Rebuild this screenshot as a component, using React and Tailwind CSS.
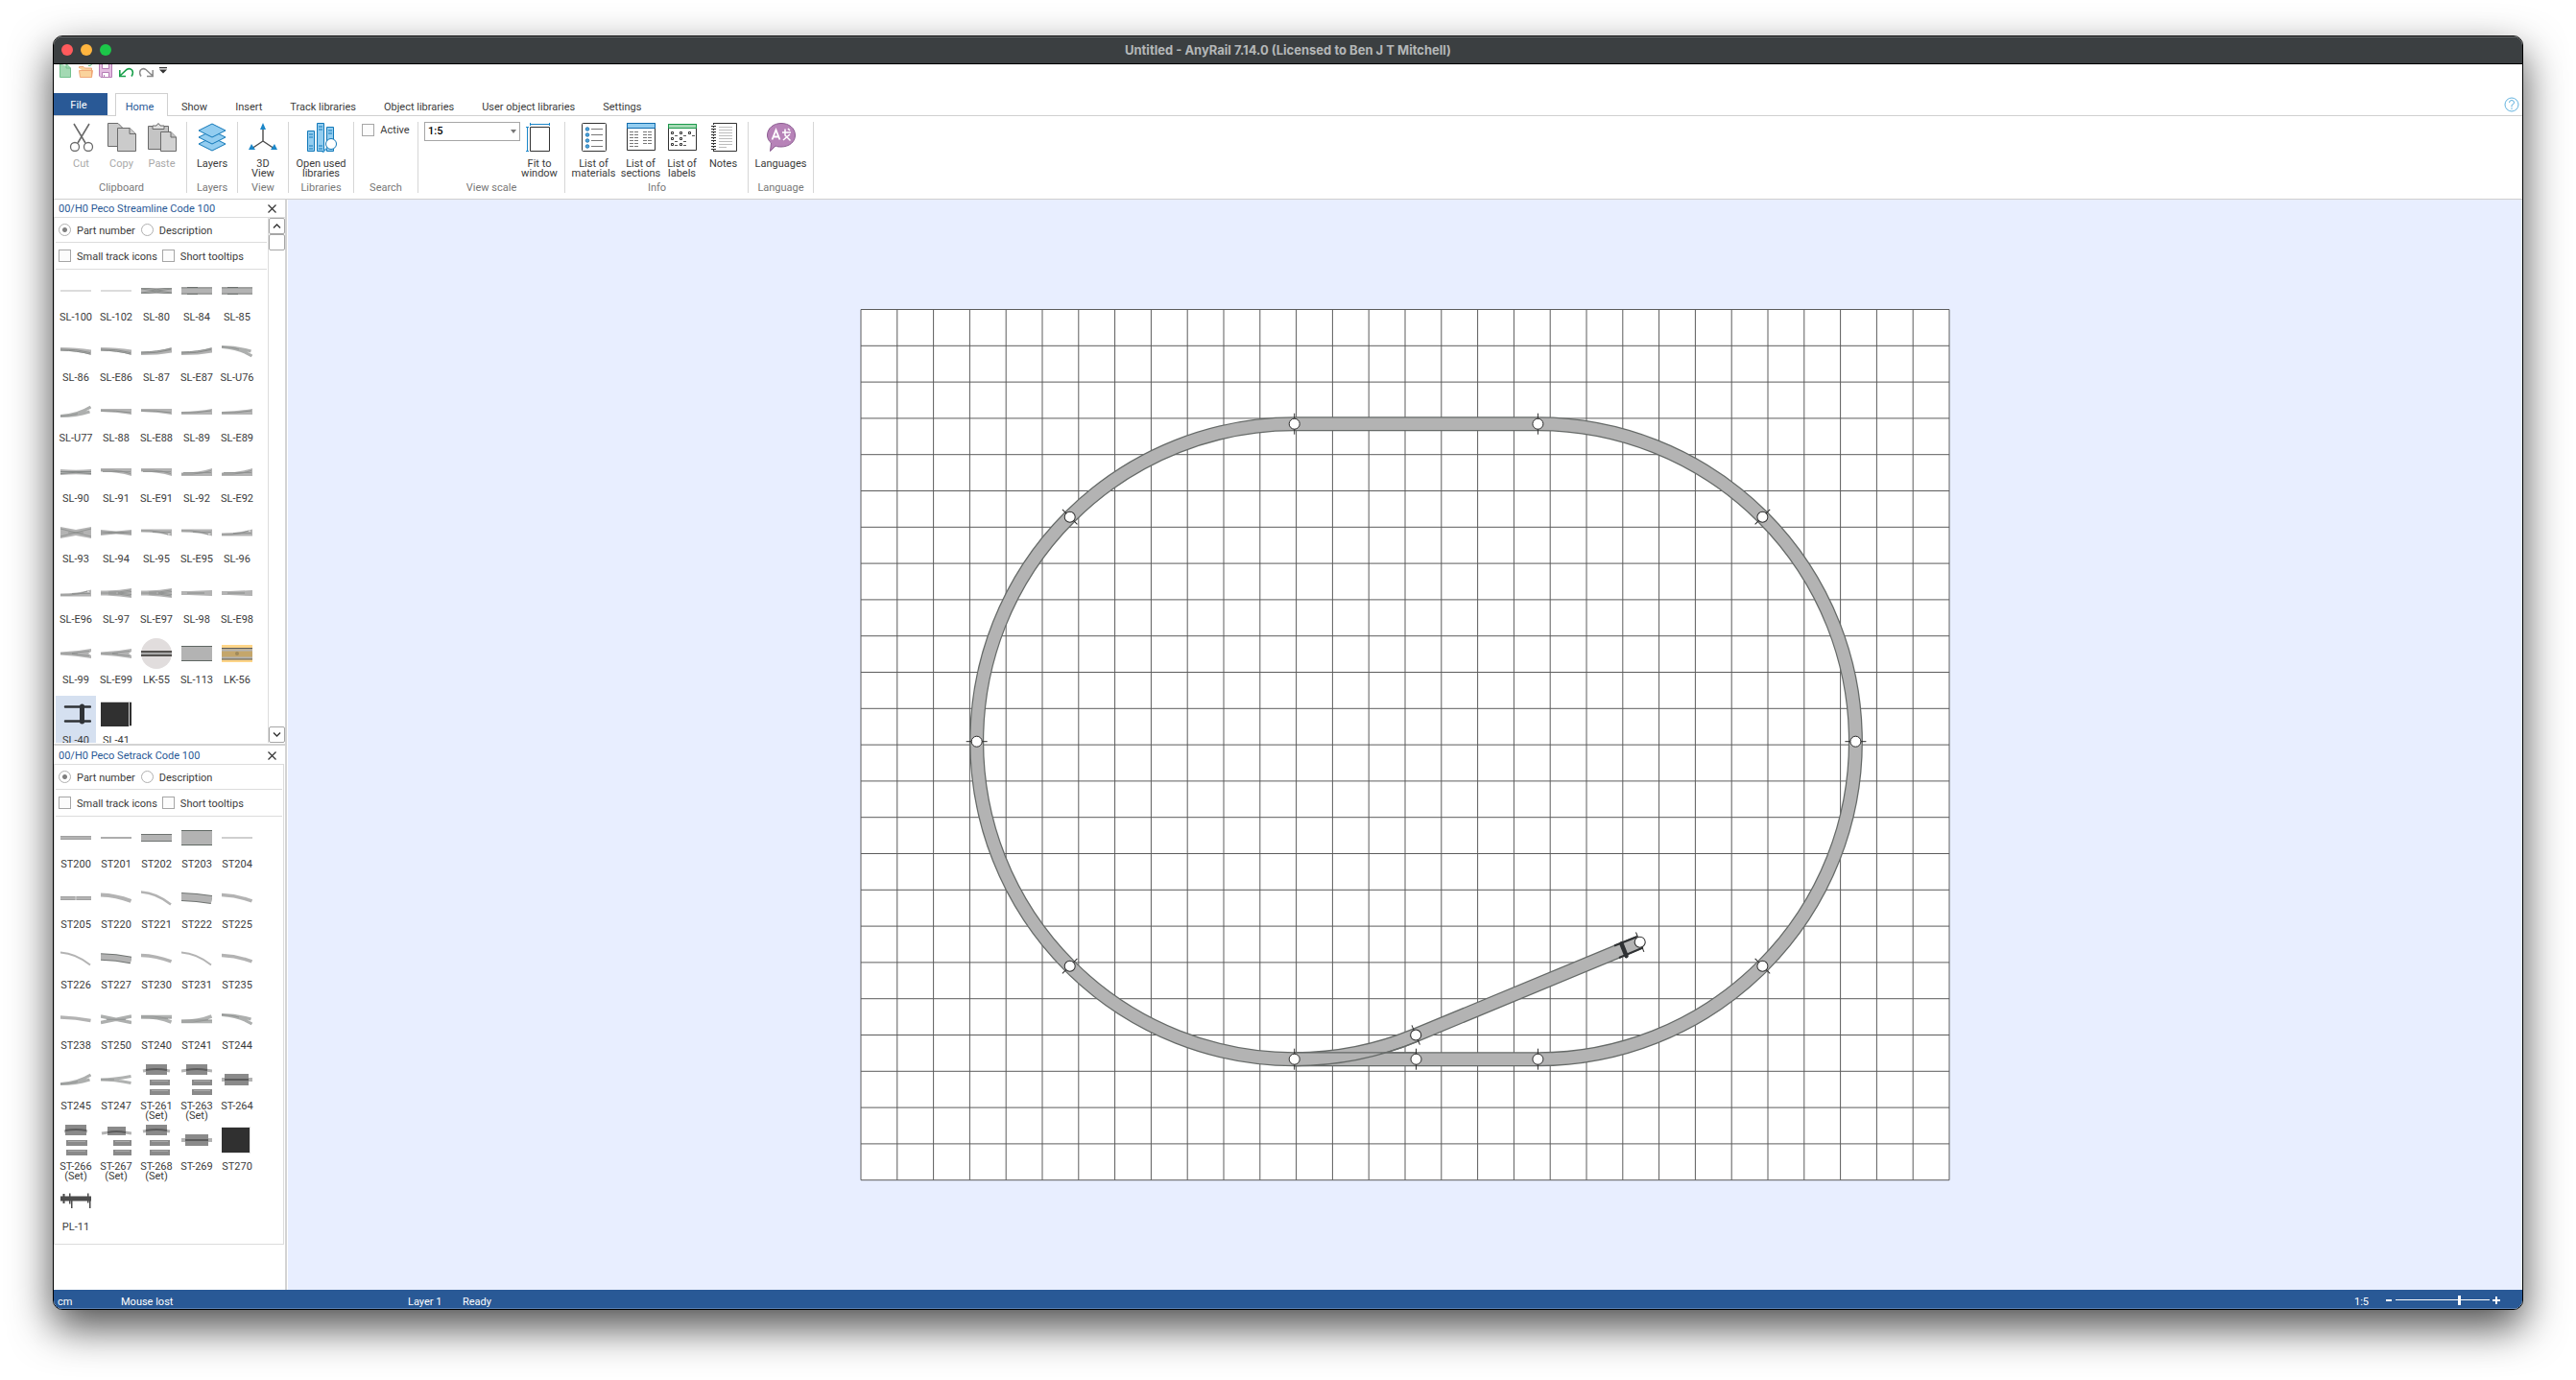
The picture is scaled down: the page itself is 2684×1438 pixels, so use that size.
import * as React from "react";

const tabs = [
  "Show",
  "Insert",
  "Track libraries",
  "Object libraries",
  "User object libraries",
  "Settings",
];

const RAIL = "#b3b3b3";
const EDGE = "#8a8d8b";

// Small drawings for the library panels, all on a 32x32 box
const Flip = ({ children }) => <g transform="matrix(1 0 0 -1 0 32)">{children}</g>;

const Wire = ({ color = "#dcdcdc" }) => <rect y="15" width="32" height="2" fill={color} />;

const Straight = ({ h, edge, split }) => (
  <g>
    <rect y={16 - h / 2} width="32" height={h} fill={RAIL} />
    {edge && (
      <path
        d={`M0 ${16.5 - h / 2}H32M0 ${15.5 + h / 2}H32`}
        stroke={edge}
        strokeWidth="1"
      />
    )}
    {split && <rect x="15.5" y={16 - h / 2} width="1" height={h} fill="#d8d8d8" />}
  </g>
);

const Curve = ({ d, w, edge }) => (
  <g fill="none">
    {edge && <path d={d} stroke="#6f7371" strokeWidth={w} />}
    <path d={d} stroke={RAIL} strokeWidth={edge ? w - 2 : w} />
  </g>
);

const Slip = () => (
  <g>
    <rect y="13" width="32" height="6" fill={RAIL} />
    <path d="M0 13.5H8Q16 16 24 13.5H32M0 18.5H8Q16 16 24 18.5H32M0 14L32 18M0 18L32 14" stroke={EDGE} fill="none" />
  </g>
);

const DoubleSlip = () => (
  <g>
    <path d="M0 13Q16 14.500 32 13V19Q16 17.500 0 19Z" fill={RAIL} />
    <path d="M0 15.500H32M0 17.500Q16 15 32 17.500" stroke="#858988" fill="none" />
  </g>
);

const Catch = ({ dark = 6 }) => (
  <g>
    <rect y="12" width="32" height="8" fill={RAIL} />
    <path d="M0 13H32M0 19H32" stroke={EDGE} />
    <path d={`M${dark} 12.500H${dark + 11}M${dark} 19.500H${dark + 11}`} stroke="#6c706e" />
  </g>
);

const CurvedTurnout = () => (
  <g>
    <path d="M0 12Q18 12 32 14.500V20Q18 15.500 0 15.500Z" fill={RAIL} />
    <path d="M0 14Q16 13.500 31 17.500M0 15Q18 15.500 31 19" stroke={EDGE} fill="none" />
  </g>
);

const SlimTurnout = () => (
  <g>
    <path d="M0 13H32V19Q18 16.500 0 16Z" fill={RAIL} />
    <path d="M0 15Q16 14.500 31 17" stroke={EDGE} fill="none" />
  </g>
);

const Turnout = () => (
  <g>
    <path d="M0 12H32V20Q18 15.500 0 15.500Z" fill={RAIL} />
    <path d="M0 14H12Q22 14.500 31 17.500M2 15.500H31" stroke={EDGE} fill="none" strokeWidth="0.8" />
  </g>
);

const LongTurnout = () => (
  <g>
    <path d="M0 12.500H32V19.500Q18 15.500 0 15.500Z" fill={RAIL} />
    <path d="M0 14H10Q20 14.500 28 18M12 15.500H31" stroke={EDGE} fill="none" strokeWidth="0.8" />
    <circle cx="29" cy="17.500" r="0.8" fill="#e5e5e5" />
  </g>
);

const Crossing = ({ e, m }) => (
  <g>
    <path
      d={`M0 ${16 - e}L16 ${16 - m}L32 ${16 - e}V${16 + e}L16 ${16 + m}L0 ${16 + e}Z`}
      fill={RAIL}
    />
    <path
      d={`M0 ${16 - e + 2}L32 ${16 + e - 2}M0 ${16 + e - 2}L32 ${16 - e + 2}M8 16H24`}
      stroke={EDGE}
      strokeWidth="0.8"
    />
  </g>
);

const ThreeWay = () => (
  <g>
    <path d="M0 13.500H6Q20 13 32 11V21Q20 19 6 18.500H0Z" fill={RAIL} />
    <path d="M0 16H16M8 15Q20 15.500 31 13M8 17Q20 16.500 31 19M18 16L32 14.500M18 16L32 17.500" stroke={EDGE} fill="none" strokeWidth="0.8" />
  </g>
);

const SlimY = () => (
  <g>
    <path d="M0 14H8L32 13V19L8 18H0Z" fill={RAIL} />
    <path d="M6 16H24" stroke={EDGE} />
  </g>
);

const WideY = () => (
  <g>
    <path d="M0 14.500Q16 14 32 11V14L29 16L32 18V21Q16 18 0 17.500Z" fill={RAIL} />
    <path d="M0 16H18M12 15.500L30 13.500M12 16.500L30 18.500" stroke={EDGE} strokeWidth="0.8" />
  </g>
);

const Fork = () => (
  <g fill="none">
    <path d="M0 11.500Q16 11.500 30.500 16M0 11.500Q18 12.500 31.500 21" stroke="#adafae" strokeWidth="3" />
    <path d="M0 11.500Q10 11.500 18 14" stroke="#8f9291" />
  </g>
);

const Points = () => (
  <g fill="none">
    <path d="M0 13.500H32M0 13.500Q18 13.500 31.500 19" stroke="#b0b2b1" strokeWidth="3.600" />
    <path d="M0 13H12Q22 14 28 15.500M0 15H32" stroke="#8f9291" strokeWidth="0.8" />
  </g>
);

const WyePoints = () => (
  <g fill="none">
    <path d="M0 16Q14 16 31.500 12.500M0 16Q14 16 31.500 19.500" stroke="#b0b2b1" strokeWidth="3.200" />
    <path d="M0 16H14" stroke="#8f9291" />
  </g>
);

const Diamond = () => (
  <g>
    <path d="M0 13L32 19.500M0 19.500L32 13" stroke="#adafae" strokeWidth="3.600" />
    <path d="M6 16.250H26" stroke="#8f9291" />
  </g>
);

const Platform = ({ x, w, y = 0, h = 11, wide = 3 }) => (
  <g>
    <path
      d={`M${x - wide} ${y + 7}Q${x + w / 2} ${y + 4} ${x + w + wide} ${y + 7}`}
      stroke={RAIL}
      strokeWidth="3"
      fill="none"
    />
    <rect x={x} y={y} width={w} height={h} fill="#8a8a8a" />
    <path d={`M${x} ${y + 6}Q${x + w / 2} ${y + 4} ${x + w} ${y + 6}`} stroke="#5c5c5c" strokeWidth="2" fill="none" />
  </g>
);

const PlatformSet = ({ x, w, px, pw, wide, y }) => (
  <g>
    <Platform x={x} w={w} wide={wide} y={y} h={y ? 9 : 11} />
    <rect x={px} y="16" width={pw} height="6" fill="#8a8a8a" />
    <rect x={px} y="26" width={pw} height="6" fill="#8a8a8a" />
    <path d={`M${px + 2} 17.500H${px + pw - 2}M${px + 2} 27.500H${px + pw - 2}`} stroke="#a9a9a9" />
  </g>
);

const SinglePlatform = ({ x = 3, w = 25 }) => (
  <g>
    <rect y="14" width="32" height="4" fill={RAIL} />
    <rect x={x} y="10" width={w} height="12" fill="#8a8a8a" />
    <rect x={x} y="15" width={w} height="2" fill="#5c5c5c" />
  </g>
);

const streamline = [
  ["SL-100", <Wire />],
  ["SL-102", <Wire />],
  ["SL-80", <Slip />],
  ["SL-84", <Catch />],
  ["SL-85", <Catch />],
  ["SL-86", <CurvedTurnout />],
  ["SL-E86", <CurvedTurnout />],
  ["SL-87", <Flip><CurvedTurnout /></Flip>],
  ["SL-E87", <Flip><CurvedTurnout /></Flip>],
  ["SL-U76", <Fork />],
  ["SL-U77", <Flip><Fork /></Flip>],
  ["SL-88", <SlimTurnout />],
  ["SL-E88", <SlimTurnout />],
  ["SL-89", <Flip><SlimTurnout /></Flip>],
  ["SL-E89", <Flip><SlimTurnout /></Flip>],
  ["SL-90", <DoubleSlip />],
  ["SL-91", <Turnout />],
  ["SL-E91", <Turnout />],
  ["SL-92", <Flip><Turnout /></Flip>],
  ["SL-E92", <Flip><Turnout /></Flip>],
  ["SL-93", <Crossing e={6} m={3} />],
  ["SL-94", <Crossing e={3} m={1.5} />],
  ["SL-95", <LongTurnout />],
  ["SL-E95", <LongTurnout />],
  ["SL-96", <Flip><LongTurnout /></Flip>],
  ["SL-E96", <Flip><LongTurnout /></Flip>],
  ["SL-97", <ThreeWay />],
  ["SL-E97", <ThreeWay />],
  ["SL-98", <SlimY />],
  ["SL-E98", <SlimY />],
  ["SL-99", <WideY />],
  ["SL-E99", <WideY />],
  ["LK-55", (
    <g>
      <circle cx="16" cy="16" r="16" fill="#e1dddd" />
      <rect y="13" width="32" height="6" fill="#a8a8a8" />
      <path d="M0 14H32M0 18H32" stroke="#3b3735" strokeWidth="1.500" />
    </g>
  )],
  ["SL-113", <Straight h={16} edge="#5f6763" />],
  ["LK-56", (
    <g>
      <rect y="7" width="32" height="18" fill="#ffd588" />
      <rect y="10" width="32" height="12" fill="#c4a66b" />
      <path d="M0 12.500H32M0 20.500H32" stroke="#b3b3b3" strokeWidth="2" />
      <path d="M0 10.500H32M0 22H32" stroke="#5a5c5c" />
      <circle cx="16" cy="16" r="2" fill="#a08a5b" />
    </g>
  )],
  ["SL-40", (
    <g stroke="#2f3236" strokeLinecap="round">
      <path d="M5 8.500H31M5 23.500H31" strokeWidth="2.500" />
      <path d="M22.500 8V24" strokeWidth="5" />
    </g>
  )],
  ["SL-41", (
    <g>
      <rect y="3" width="32" height="26" fill="#cfcfcf" />
      <rect y="4" width="29" height="25" fill="#303030" />
      <rect x="30" y="4" width="2" height="24" fill="#303030" />
    </g>
  )],
];

const setrack = [
  ["ST200", <Straight h={4} edge="#a0a0a0" />],
  ["ST201", <Wire color="#adadad" />],
  ["ST202", <Straight h={8} edge="#6f7371" />],
  ["ST203", <Straight h={16} edge="#5f6763" />],
  ["ST204", <Wire color="#cfcfcf" />],
  ["ST205", <Straight h={4} edge="#a0a0a0" split />],
  ["ST220", <Curve d="M0 12.5Q16 13 31.500 19" w={4} />],
  ["ST221", <Curve d="M0 9.5Q16 10.500 31 22.500" w={2.4} />],
  ["ST222", <Curve d="M0 14.5Q16 14.800 31.500 17.500" w={9} edge />],
  ["ST225", <Curve d="M0 12.5Q16 13 31.500 19" w={3.4} />],
  ["ST226", <Curve d="M0 9.5Q16 10.500 31 22.500" w={2} />],
  ["ST227", <Curve d="M0 14Q16 14.300 31.500 17.500" w={7.5} edge />],
  ["ST230", <Curve d="M0 12.5Q16 13 31.500 19" w={3.4} />],
  ["ST231", <Curve d="M0 9.5Q16 10.500 31 22.500" w={1.8} />],
  ["ST235", <Curve d="M0 12.5Q16 13 31.500 19" w={3.4} />],
  ["ST238", <Curve d="M0 14Q16 14.500 31.500 17.500" w={3.6} />],
  ["ST250", <Diamond />],
  ["ST240", <Points />],
  ["ST241", <Flip><Points /></Flip>],
  ["ST244", <Fork />],
  ["ST245", <Flip><Fork /></Flip>],
  ["ST247", <WyePoints />],
  ["ST-261 (Set)", <PlatformSet x={5} w={22} px={9} pw={21} wide={3} />],
  ["ST-263 (Set)", <PlatformSet x={5} w={22} px={11} pw={21} wide={5} />],
  ["ST-264", <SinglePlatform />],
  ["ST-266 (Set)", <PlatformSet x={5} w={22} px={6} pw={22} wide={1} />],
  ["ST-267 (Set)", <PlatformSet x={7} w={19} px={13} pw={19} wide={6} y={2} />],
  ["ST-268 (Set)", <PlatformSet x={5} w={22} px={9} pw={21} wide={3} />],
  ["ST-269", <SinglePlatform x={4} w={24} />],
  ["ST270", (
    <g>
      <rect y="2" width="30" height="28" fill="#e2e2e2" />
      <rect y="3" width="29" height="26" fill="#303030" />
    </g>
  )],
  ["PL-11", (
    <g fill="#4c4c4c">
      <rect y="11.500" width="32" height="5" />
      <rect x="2.500" y="9" width="2" height="10" />
      <rect x="9" y="8.500" width="1.500" height="11" />
      <rect x="11" y="14" width="1.500" height="10" />
      <rect x="28" y="8.500" width="1.500" height="10" />
      <rect x="30" y="14" width="1.500" height="10" />
    </g>
  )],
];

// Ribbon icons, 30x30
const CutIcon = () => (
  <svg viewBox="0 0 30 30" className="size-[30px]" fill="none" stroke="#6b6b6b">
    <path d="M7 1L19 21M23 1L11 21" strokeWidth="1.600" />
    <circle cx="8" cy="25" r="4.500" strokeWidth="1.300" />
    <circle cx="22" cy="25" r="4.500" strokeWidth="1.300" />
  </svg>
);

const CopyIcon = () => (
  <svg viewBox="0 0 30 30" className="size-[30px]" fill="#cbcbcb" stroke="#6b6b6b">
    <path d="M0.500 0.500H11L16.500 6V24.500H0.500Z" />
    <path d="M10.500 5.500H23L29.500 11.500V29.500H10.500Z" />
    <path d="M23 5.500V11.500H29.500" />
  </svg>
);

const PasteIcon = () => (
  <svg viewBox="0 0 30 30" className="size-[30px]" fill="#c4c4c4" stroke="#6b6b6b">
    <path d="M0.500 3.500H21.500V27.500H0.500Z" />
    <path d="M5 6.500V3H9Q11 -1.500 13 3H17V6.500Z" fill="#e0e0e0" />
    <path d="M13.500 9.500H24L29.500 15V29.500H13.500Z" fill="#d2d2d2" />
    <path d="M24 9.500V15H29.500" />
  </svg>
);

const LayersIcon = () => (
  <svg viewBox="0 0 30 30" className="size-[30px]" fill="#93cdf0" stroke="#1278b8">
    <path d="M1 22L15 15L29 22L15 29Z" />
    <path d="M1 15L15 8L29 15L15 22Z" />
    <path d="M1 8L15 1L29 8L15 15Z" />
  </svg>
);

const ThreeDIcon = () => (
  <svg viewBox="0 0 30 30" className="size-[30px]">
    <path d="M15 5V19L3 27M15 19L27 27" fill="none" stroke="#4a4a4a" strokeWidth="1.400" />
    <path d="M15 0L18 7H12ZM0 28L3 22L7 28ZM30 28L23 28L27 22Z" fill="#1c87c9" />
  </svg>
);

const LibrariesIcon = () => (
  <svg viewBox="0 0 32 32" className="size-8" fill="#93cdf0" stroke="#1278b8">
    <path d="M1.500 9.500H8.500V30.500H1.500ZM11.500 1.500H18.500V30.500H11.500ZM21.500 5.500H28.500V30.500H21.500Z" />
    <path d="M3 13H7M3 16H7M3 25H7M3 28H7M13 5H17M13 8H17M13 25H17M13 28H17M23 9H27M23 12H27" />
    <circle cx="26" cy="23" r="5.500" fill="#ffffff" />
    <path d="M22 27L17 32" stroke="#4a9fd4" strokeWidth="1.600" />
  </svg>
);

const FitIcon = () => (
  <svg viewBox="0 0 30 32" className="h-8 w-[30px]" fill="none" stroke="#1c87c9">
    <path d="M5.500 2.500H25.500M5.500 1V4M25.500 1V4M2.500 5.500V30.500M1 5.500H4M1 30.500H4" />
    <path d="M5.500 5.500H25.500V30.500H5.500Z" stroke="#333333" />
  </svg>
);

const MaterialsIcon = () => (
  <svg viewBox="0 0 30 32" className="h-8 w-[30px]" fill="none">
    <rect x="2.500" y="1.500" width="25" height="29" rx="1" stroke="#333333" />
    <path d="M12 7.500H24M12 13.500H24M12 19.500H24M12 25.500H24" stroke="#777777" />
    <g fill="#4aa3dc" stroke="#1c6ea8" strokeWidth="0.800">
      <circle cx="8" cy="7.500" r="1.800" />
      <circle cx="8" cy="13.500" r="1.800" />
      <circle cx="8" cy="19.500" r="1.800" />
      <circle cx="8" cy="25.500" r="1.800" />
    </g>
  </svg>
);

const SectionsIcon = () => (
  <svg viewBox="0 0 30 32" className="h-8 w-[30px]" fill="none">
    <path d="M0.500 1.500H29.500V29.500H0.500Z" stroke="#333333" />
    <path d="M0.500 1.500H29.500V6.500H0.500Z" fill="#93cdf0" stroke="#0f6db0" />
    <path d="M3 10.500H13M3 13.500H13M3 16.500H13M3 19.500H13M3 22.500H13M3 25.500H13M17 10.500H27M17 13.500H27M17 16.500H27M17 19.500H27M17 22.500H27" stroke="#777777" strokeDasharray="4 1" />
  </svg>
);

const LabelsIcon = () => (
  <svg viewBox="0 0 30 32" className="h-8 w-[30px]" fill="none">
    <path d="M0.500 2.500H29.500V29.500H0.500Z" stroke="#333333" />
    <path d="M0.500 2.500H29.500V6.500H0.500Z" fill="#a5d9b4" stroke="#1b9a4b" />
    <path d="M3.500 10.500H5.500V12.500H3.500ZM12.500 10.500H14.500V12.500H12.500ZM21.500 10.500H23.500V12.500H21.500ZM3.500 16.500H5.500V18.500H3.500ZM12.500 16.500H14.500V18.500H12.500ZM3.500 22.500H5.500V24.500H3.500ZM12.500 22.500H14.500V24.500H12.500Z" stroke="#333333" />
    <path d="M7 14.500H10M16 14.500H19M25 14.500H28M7 20.500H10M16 20.500H19M7 24.500H10M16 24.500H19" stroke="#555555" />
  </svg>
);

const NotesIcon = () => (
  <svg viewBox="0 0 30 32" className="h-8 w-[30px]" fill="none">
    <path d="M4 1.500H28.500V30.500H4" stroke="#333333" />
    <path d="M4.500 1V31" stroke="#333333" strokeDasharray="2 1" />
    <path d="M2 4.500H7M2 7.500H7M2 10.500H7M2 13.500H7M2 16.500H7M2 19.500H7M2 22.500H7M2 25.500H7M2 28.500H7" stroke="#333333" />
    <path d="M10 5.500H24M10 8.500H24M10 11.500H24M10 14.500H24M10 17.500H24M10 20.500H24M10 23.500H24M10 26.500H18" stroke="#bdbdbd" />
  </svg>
);

const LanguagesIcon = () => (
  <svg viewBox="0 0 30 32" className="h-8 w-[30px]">
    <path d="M15 1.500C23 1.500 29.500 6.500 29.500 14C29.500 21 23 26 15 26C13 26 11 26 9 25L3.500 30.500L4.500 22C2 20 0.500 17 0.500 14C0.500 6.500 7 1.500 15 1.500Z" fill="#b783b8" stroke="#8b5d91" />
    <g fill="none" stroke="#ffffff" strokeWidth="1.800">
      <path d="M5.500 18.500L9.500 8.500L13.500 18.500M7 15.500H12" />
      <path d="M16 11H25M19 7.500V14L24.500 19.500M24 13L17 19M22 7L24 9" strokeWidth="1.500" />
    </g>
  </svg>
);

function Group({ label, className, children }) {
  return (
    <div className={`flex h-[74px] flex-col border-r border-[#d6d6d6] ${className}`}>
      <div className="flex flex-1 items-start justify-center">{children}</div>
      <div className="text-center leading-[11px] text-[#777777]">{label}</div>
    </div>
  );
}

function BigButton({ icon, lines, className, disabled }) {
  return (
    <button
      type="button"
      disabled={disabled}
      className={`flex flex-col items-center leading-[10px] disabled:text-[#a9a9a9] ${className}`}
    >
      <span className="flex h-8 items-center">{icon}</span>
      <span className="mt-[7px]">
        {lines.map((line) => (
          <span key={line} className="block whitespace-nowrap">{line}</span>
        ))}
      </span>
    </button>
  );
}

function Check({ label }) {
  return (
    <label className="flex items-center gap-[6px]">
      <input type="checkbox" className="size-[13px] appearance-none border border-[#a6a6a6] bg-[#fcfcfc] checked:bg-[#295996]" />
      <span className="pt-px">{label}</span>
    </label>
  );
}

function Radio({ label, name, defaultChecked }) {
  return (
    <label className="flex items-center gap-[6px]">
      <input
        type="radio"
        name={name}
        defaultChecked={defaultChecked}
        className="size-[13px] appearance-none rounded-full border border-[#b0b0b0] bg-white checked:bg-[radial-gradient(circle,#808080_0_2px,#ffffff_3px)]"
      />
      <span className="pt-px">{label}</span>
    </label>
  );
}

function Chevron({ up }) {
  return (
    <svg viewBox="0 0 9 9" className="size-[9px]" fill="none" stroke="#333333" strokeWidth="1.400">
      <path d={up ? "M1 6.500L4.500 3L8 6.500" : "M1 2.500L4.500 6L8 2.500"} />
    </svg>
  );
}

function LibraryPanel({ title, name, items, selected, scroll }) {
  return (
    <section className={`flex min-h-0 flex-col ${scroll ? "mb-px border-b-2 border-[#d3d3d3]" : ""}`}>
      <header className="flex h-[18px] shrink-0 items-center justify-between pr-2 pl-[5px]">
        <h2 className="text-[#295996]">{title}</h2>
        <button type="button" aria-label="Close" className="p-px">
          <svg viewBox="0 0 9 9" className="size-[9px]" stroke="#333333" strokeWidth="1.200">
            <path d="M0.500 0.500L8.500 8.500M8.500 0.500L0.500 8.500" />
          </svg>
        </button>
      </header>
      <div className={`flex min-h-0 border border-[#dcdcdc] ${scroll ? "mb-px flex-1 border-r-0 border-b-0" : "mr-px"}`}>
        <div className="flex min-w-0 flex-1 flex-col overflow-hidden px-px">
          <div className="flex h-[26px] shrink-0 items-center gap-[6px] border-b border-[#dcdcdc] pl-[3px]">
            <Radio label="Part number" name={name} defaultChecked />
            <Radio label="Description" name={name} />
          </div>
          <div className="mb-[3px] flex h-7 shrink-0 items-center gap-[5px] border-b border-[#dcdcdc] pl-[3px]">
            <Check label="Small track icons" />
            <Check label="Short tooltips" />
          </div>
          <ul className={`grid grid-cols-[repeat(auto-fill,42px)] auto-rows-[63px] ${scroll ? "min-h-0 flex-1 overflow-hidden" : "pb-px"}`}>
            {items.map(([label, icon]) => (
              <li
                key={label}
                className={`flex flex-col items-center pt-[3px] text-center leading-[10px] ${label === selected ? "bg-[#d5e0f0]" : ""}`}
              >
                <svg viewBox="0 0 32 32" className="size-8">{icon}</svg>
                <span className="mt-[7px]">{label}</span>
              </li>
            ))}
          </ul>
        </div>
        {scroll && (
          <div className="flex w-[18px] flex-col border-l border-[#dcdcdc]">
            <button type="button" aria-label="Scroll up" className="flex h-[17px] items-center justify-center rounded-xs border border-[#a6a6a6]">
              <Chevron up />
            </button>
            <div className="h-[17px] rounded-xs border border-[#a6a6a6]" />
            <button type="button" aria-label="Scroll down" className="mt-auto flex h-[17px] items-center justify-center rounded-xs border border-[#a6a6a6]">
              <Chevron />
            </button>
          </div>
        )}
      </div>
    </section>
  );
}

// Joints of the track plan: x, y and direction of the tick in degrees
const joints = [
  [452.7, 120.7, 90],
  [706.4, 120.7, 90],
  [218.7, 217.7, 45],
  [940.4, 217.7, -45],
  [121.7, 451.7, 0],
  [1037.4, 451.7, 0],
  [218.7, 685.7, -45],
  [940.4, 685.7, 45],
  [452.7, 782.7, 90],
  [579.5, 782.7, 90],
  [706.4, 782.7, 90],
  [579.2, 757.5, 67.5],
  [812.7, 660.7, 67.5],
];

function TrackPlan() {
  const oval = "M452.7 782.7A331 331 0 0 1 452.7 120.7H706.4A331 331 0 0 1 706.4 782.7";
  const siding = "M452.7 782.7A331 331 0 0 0 579.2 757.5L812.7 660.7";
  return (
    <svg viewBox="0 0 1136 910" className="w-[1136px]" fill="none">
      <rect x="1" y="1.500" width="1134" height="907.200" fill="#ffffff" />
      <g stroke="#5c5c5c">
        {Array.from({ length: 31 }, (_, i) => (
          <path key={`v${i}`} d={`M${1 + i * 37.8} 1.500V908.700`} />
        ))}
        {Array.from({ length: 25 }, (_, i) => (
          <path key={`h${i}`} d={`M1 ${1.5 + i * 37.8}H1135`} />
        ))}
      </g>
      <path d={oval} stroke="#666a68" strokeWidth="15" />
      <path d={siding} stroke="#666a68" strokeWidth="15" />
      <path d="M452.7 782.700H706.400" stroke="#666a68" strokeWidth="15" />
      <path d={oval} stroke={RAIL} strokeWidth="12.500" />
      <path d={siding} stroke={RAIL} strokeWidth="12.500" />
      <path d="M452.7 782.700H706.400" stroke={RAIL} strokeWidth="12.500" />
      {/* rails crossing over each other in the turnout */}
      <path d="M452.7 775.800H579.500M452.7 789.600A337.900 337.900 0 0 0 582 763.800" stroke="#666a68" strokeWidth="1.250" />
      {/* buffer stop */}
      <g stroke="#2f3133">
        <path d="M786 664.500L809.500 655.200M791 677L816 666.400" strokeWidth="2" />
        <path d="M793.500 662.500L798.500 675" strokeWidth="4.600" strokeLinecap="round" />
      </g>
      {joints.map(([x, y, a]) => (
        <g key={`${x}-${y}`} transform={`translate(${x} ${y}) rotate(${a})`} stroke="#2b2b2b">
          <path d="M-11 0H11" />
          <circle r="5.500" fill="#ffffff" />
        </g>
      ))}
    </svg>
  );
}

function QuickAccess() {
  return (
    <div className="flex h-[30px] items-start gap-[5px] pl-[5px]">
      <button type="button" aria-label="New">
        <svg viewBox="0 0 16 15" className="h-[15px] w-4" fill="#a3d9b3" stroke="#72c08c">
          <path d="M1.500 -1V13.500H12.500V4L8 -0.500V4H12.500" />
        </svg>
      </button>
      <button type="button" aria-label="Open">
        <svg viewBox="0 0 16 15" className="h-[15px] w-4" fill="#fad39c" stroke="#f0a878">
          <path d="M0.500 4V2.500H5L6.500 4H13.500V13.500H1.500L0.500 6.500H14.500L13.500 13.500" />
          <path d="M10 1.500Q13 2.500 14 -1" fill="none" stroke="#58b77a" />
        </svg>
      </button>
      <button type="button" aria-label="Save">
        <svg viewBox="0 0 16 15" className="h-[15px] w-4" fill="#e3bce0" stroke="#b57cb5">
          <path d="M0.500 -1H13.500V13.500H2L0.500 12Z" />
          <path d="M3.500 -1H10.500V4.500H3.500ZM3.500 8.500H10.500V13.500H3.500Z" fill="#ffffff" />
          <path d="M5.500 11V13" />
        </svg>
      </button>
      <button type="button" aria-label="Undo">
        <svg viewBox="0 0 16 15" className="h-[15px] w-4" fill="none" stroke="#19a04b" strokeWidth="1.600">
          <path d="M0.800 6V12.500H7M1 12L8 5.500Q11 3.500 13.500 6Q15.500 9 13 12.500" />
        </svg>
      </button>
      <button type="button" aria-label="Redo">
        <svg viewBox="0 0 16 15" className="h-[15px] w-4" fill="none" stroke="#8a8a8a" strokeWidth="1.500">
          <path d="M14.200 6V12.500H8M14 12L7 5.500Q4 3.500 1.500 6Q-0.500 9 2 12.500" />
        </svg>
      </button>
      <button type="button" aria-label="Customize">
        <svg viewBox="0 0 8 15" className="h-[15px] w-2" fill="#333333">
          <path d="M0 3H8V4.200H0ZM0 5.500H8L4 9.500Z" />
        </svg>
      </button>
    </div>
  );
}

function Ribbon() {
  return (
    <div className="border-b border-[#cfcfcf] bg-white">
      <QuickAccess />
      <nav className="flex h-6 items-stretch border-b border-[#d0d0d0]">
        <button type="button" className="mr-2 w-14 bg-[#295996] pt-px pr-1 text-white">File</button>
        <button type="button" className="-mb-px w-[55px] border border-b-0 border-[#d0d0d0] bg-white pt-1 pr-1 text-[#295996]">Home</button>
        {tabs.map((tab) => (
          <button key={tab} type="button" className="pt-[6px] pr-[15px] pl-[14px]">{tab}</button>
        ))}
        <button type="button" aria-label="Help" className="mr-[3px] ml-auto">
          <svg viewBox="0 0 16 16" className="size-4" fill="none" stroke="#62b2de">
            <circle cx="8" cy="8" r="7" />
            <path d="M5.500 6Q5.500 3.500 8 3.500Q10.500 3.500 10.500 6Q10.500 7.500 8 8.500V10.500M8 11.500V13" />
          </svg>
        </button>
      </nav>
      <div className="flex h-[86px] pt-[6px]">
        <Group label="Clipboard" className="w-[139px] pl-[3px]">
          <BigButton icon={<CutIcon />} lines={["Cut"]} className="w-[42px]" disabled />
          <BigButton icon={<CopyIcon />} lines={["Copy"]} className="w-[42px]" disabled />
          <BigButton icon={<PasteIcon />} lines={["Paste"]} className="w-[42px]" disabled />
        </Group>
        <Group label="Layers" className="w-[53px]">
          <BigButton icon={<LayersIcon />} lines={["Layers"]} className="w-12" />
        </Group>
        <Group label="View" className="w-[53px]">
          <BigButton icon={<ThreeDIcon />} lines={["3D", "View"]} className="w-12" />
        </Group>
        <Group label="Libraries" className="w-[68px]">
          <BigButton icon={<LibrariesIcon />} lines={["Open used", "libraries"]} className="w-16" />
        </Group>
        <Group label="Search" className="w-[67px]">
          <div className="pt-px">
            <Check label="Active" />
          </div>
        </Group>
        <Group label="View scale" className="w-[153px]">
          <div className="relative">
            <select aria-label="View scale" className="h-5 w-[100px] appearance-none rounded-none border border-[#a6a6a6] bg-white pl-[3px] leading-4 font-medium text-black">
              <option>1:5</option>
            </select>
            <svg viewBox="0 0 6 4" className="pointer-events-none absolute top-2 right-1 h-1 w-[6px]" fill="#777777">
              <path d="M0 0H6L3 4Z" />
            </svg>
          </div>
          <BigButton icon={<FitIcon />} lines={["Fit to", "window"]} className="w-10" />
        </Group>
        <Group label="Info" className="w-[191px] pl-px">
          <BigButton icon={<MaterialsIcon />} lines={["List of", "materials"]} className="w-[52px]" />
          <BigButton icon={<SectionsIcon />} lines={["List of", "sections"]} className="w-[46px]" />
          <BigButton icon={<LabelsIcon />} lines={["List of", "labels"]} className="w-10" />
          <BigButton icon={<NotesIcon />} lines={["Notes"]} className="w-[46px]" />
        </Group>
        <Group label="Language" className="w-[68px]">
          <BigButton icon={<LanguagesIcon />} lines={["Languages"]} className="w-16" />
        </Group>
      </div>
    </div>
  );
}

function StatusBar() {
  return (
    <footer className="flex h-5 items-center bg-[#295996] pt-[5px] pl-1 leading-4 text-white shadow-[inset_0_-1px_0_#5a80b3]">
      <span className="w-[66px]">cm</span>
      <span className="w-[299px]">Mouse lost</span>
      <span className="w-[57px]">Layer 1</span>
      <span>Ready</span>
      <div className="mr-[23px] ml-auto flex items-center">
        <span className="mr-[17px]">1:5</span>
        <button type="button" aria-label="Zoom out" className="mb-1">
          <svg viewBox="0 0 8 8" className="size-2" fill="#ffffff"><path d="M1 3H7V5H1Z" /></svg>
        </button>
        <input
          type="range"
          aria-label="Zoom"
          defaultValue="68"
          className="mx-[3px] mb-1 h-[10px] w-[98px] appearance-none bg-[linear-gradient(#ffffff,#ffffff)] bg-[length:100%_1px] bg-center bg-no-repeat [&::-webkit-slider-thumb]:h-[10px] [&::-webkit-slider-thumb]:w-[3px] [&::-webkit-slider-thumb]:appearance-none [&::-webkit-slider-thumb]:bg-white"
        />
        <button type="button" aria-label="Zoom in" className="mb-1">
          <svg viewBox="0 0 8 8" className="size-2" fill="#ffffff"><path d="M0 3H3V0H5V3H8V5H5V8H3V5H0Z" /></svg>
        </button>
      </div>
    </footer>
  );
}

export default function App() {
  return (
    <div className="h-screen bg-white px-[55px] pt-[37px] pb-[73px] font-['Roboto',sans-serif] text-[11px] leading-[13px] text-[#3b3b3b]">
      <div className="flex h-full flex-col overflow-hidden rounded-[10px] border border-black bg-white shadow-[0_18px_44px_rgba(0,0,0,0.7)]">
        <div className="grid h-[29px] shrink-0 grid-cols-3 items-center border-b border-black bg-[#3b3f41] shadow-[inset_0_1px_0_#6b6e70]">
          <div className="flex gap-2 pl-2">
            <button type="button" aria-label="Close window" className="size-3 rounded-full bg-[#ff5a5c]" />
            <button type="button" aria-label="Minimize window" className="size-3 rounded-full bg-[#ffb53f]" />
            <button type="button" aria-label="Zoom window" className="size-3 rounded-full bg-[#1cc749]" />
          </div>
          <h1 className="text-center font-['Inter',sans-serif] text-[13px] leading-4 font-bold whitespace-nowrap text-[#b4b7b8]">
            Untitled - AnyRail 7.14.0 (Licensed to Ben J T Mitchell)
          </h1>
        </div>
        <Ribbon />
        <main className="flex min-h-0 flex-1">
          <aside className="grid w-[243px] shrink-0 grid-rows-[570px_minmax(0,1fr)] border-r-2 border-[#d3d3d3]">
            <LibraryPanel title="00/H0 Peco Streamline Code 100" name="streamline" items={streamline} selected="SL-40" scroll />
            <LibraryPanel title="00/H0 Peco Setrack Code 100" name="setrack" items={setrack} />
          </aside>
          <div className="ml-px flex flex-1 items-center justify-center bg-[#e8eeff]">
            <TrackPlan />
          </div>
        </main>
        <StatusBar />
      </div>
    </div>
  );
}
